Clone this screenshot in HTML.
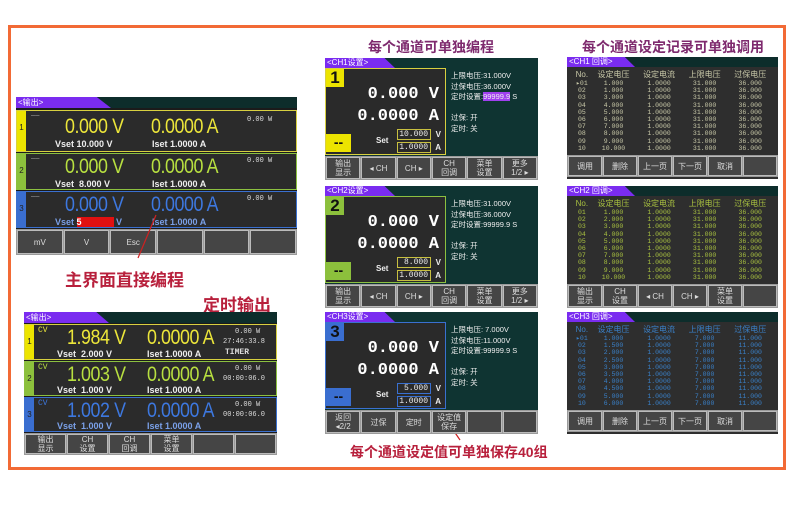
<!DOCTYPE html>
<html><head><meta charset="utf-8">
<style>
*{margin:0;padding:0;box-sizing:border-box}
body{width:790px;height:506px;background:#fff;position:relative;overflow:hidden;font-family:"Liberation Sans","Noto Sans CJK SC",sans-serif}
.a{position:absolute}
.frame{left:8px;top:25px;width:778px;height:445px;border:3px solid #f26a35}
.ttl{font-weight:bold;color:#7e2a6e;font-size:14px;white-space:nowrap}
.red{color:#b8203c;font-weight:bold;font-size:17px;white-space:nowrap}
.panel{background:#1b1b1b}
.hdr{height:11px;background:#0d2d2b}
.tab{position:absolute;left:0;top:0;height:11px;background:#7a2cf0;color:#fff;font-size:8px;line-height:11px;padding-left:2px;clip-path:polygon(0 0,85% 0,100% 100%,0 100%)}
.row{position:absolute;background:#2b2b2b;border:1px solid}
.strip{position:absolute;left:0;top:0;bottom:0;width:9px;font-size:8px;color:#222;text-align:center;padding-top:12px}
.big{position:absolute;font-size:21px;white-space:nowrap;transform:scaleX(.85);transform-origin:0 0;letter-spacing:-.5px}
.sm{position:absolute;font-size:9px;font-weight:bold;color:#eee;white-space:nowrap}
.w{position:absolute;font-size:7px;color:#ddd;white-space:nowrap;font-family:"Liberation Mono",monospace}
.btns{position:absolute;display:flex;background:#9a9a9a;padding:1px;gap:1px}
.btns div{flex:1;background:#454545;border:1px solid #bbb;color:#ddd;font-size:8px;text-align:center;line-height:9px;display:flex;align-items:center;justify-content:center}
.set{position:absolute;width:213px;height:122px;background:#0f3432}
.lbox{position:absolute;left:0;top:10px;width:121px;height:87px;background:#2a2a2a;border:1px solid}
.num{position:absolute;left:0;top:0;width:18px;height:18px;font-size:17px;font-weight:bold;color:#111;line-height:18px;text-align:center}
.dash{position:absolute;left:0;bottom:2px;width:25px;height:18px;color:#111;font-weight:bold;font-size:14px;line-height:16px;text-align:center}
.bv{position:absolute;right:6px;color:#fff;font-weight:bold;font-size:17px;font-family:"Liberation Mono",monospace;white-space:nowrap}
.sb{position:absolute;right:14px;width:34px;height:11px;border:1px solid #c8c040;color:#eee;font-size:8px;line-height:9px;text-align:right;padding-right:2px;font-family:"Liberation Mono",monospace}
.info{position:absolute;left:126px;color:#eee;font-size:7.5px;line-height:10.5px;white-space:nowrap}
.tbl{position:absolute;width:211px;height:122px;background:#2e2e2e}
.tbl table{position:absolute;left:6px;top:13px;width:200px;border-collapse:collapse;font-size:6.5px;line-height:7.2px;font-family:"Liberation Mono","Noto Sans CJK SC",monospace}
.tbl td{text-align:center;padding:0}
.tbl th{font-weight:normal;font-size:8px;line-height:10px;font-family:"Liberation Sans","Noto Sans CJK SC",sans-serif}
</style></head><body>
<div class="a frame"></div>

<div class="a ttl" style="left:368px;top:37px">每个通道可单独编程</div>
<div class="a ttl" style="left:582px;top:37px">每个通道设定记录可单独调用</div>

<!-- Panel A -->
<div class="a panel" style="left:16px;top:97px;width:281px;height:158px">
 <div class="hdr"><div class="tab" style="width:95px">&lt;输出&gt;</div></div>
 <div class="row" style="left:0;top:13px;width:281px;height:42px;border-color:#d8d040"><div class="strip" style="background:#ece400">1</div>
  <div class="w" style="left:14px;top:1px;color:#aaa">——</div>
  <div class="big" style="left:48px;top:4px;color:#ece63a">0.000 V</div><div class="big" style="left:134px;top:4px;color:#ece63a">0.0000 A</div>
  <div class="w" style="left:230px;top:5px">0.00 W</div>
  <div class="sm" style="left:38px;top:28px">Vset 10.000 V</div><div class="sm" style="left:135px;top:28px">Iset 1.0000 A</div></div>
 <div class="row" style="left:0;top:56px;width:281px;height:37px;border-color:#8cc040"><div class="strip" style="background:#8cc03c">2</div>
  <div class="w" style="left:14px;top:1px;color:#aaa">——</div>
  <div class="big" style="left:48px;top:1px;color:#b8e040">0.000 V</div><div class="big" style="left:134px;top:1px;color:#b8e040">0.0000 A</div>
  <div class="w" style="left:230px;top:3px">0.00 W</div>
  <div class="sm" style="left:38px;top:25px">Vset&nbsp; 8.000 V</div><div class="sm" style="left:135px;top:25px">Iset 1.0000 A</div></div>
 <div class="row" style="left:0;top:94px;width:281px;height:37px;border-color:#3a70d0"><div class="strip" style="background:#3a6ed0">3</div>
  <div class="w" style="left:14px;top:1px;color:#aaa">——</div>
  <div class="big" style="left:48px;top:1px;color:#3d78e0">0.000 V</div><div class="big" style="left:134px;top:1px;color:#3d78e0">0.0000 A</div>
  <div class="w" style="left:230px;top:3px">0.00 W</div>
  <div class="sm" style="left:38px;top:25px;color:#7aa0e8">Vset <span style="color:#fff;background:#e01010;padding-right:32px">5</span> V</div><div class="sm" style="left:135px;top:25px;color:#7aa0e8">Iset 1.0000 A</div></div>
 <div class="btns" style="left:0;top:132px;width:281px;height:26px"><div>mV</div><div>V</div><div>Esc</div><div></div><div></div><div></div></div>
</div>
<svg class="a" style="left:0;top:0" width="790" height="506"><line x1="156" y1="215" x2="138" y2="258" stroke="#d02020" stroke-width="1.2"/><line x1="238" y1="312" x2="238" y2="345" stroke="#d02020" stroke-width="1.2"/><line x1="445" y1="418" x2="460" y2="440" stroke="#d02020" stroke-width="1.2"/></svg>
<div class="a red" style="left:65px;top:266px">主界面直接编程</div>
<div class="a red" style="left:203px;top:291px">定时输出</div>

<!-- Panel B -->
<div class="a panel" style="left:24px;top:312px;width:253px;height:143px">
 <div class="hdr"><div class="tab" style="width:85px">&lt;输出&gt;</div></div>
 <div class="row" style="left:0;top:12px;width:253px;height:36px;border-color:#d8d040"><div class="strip" style="background:#ece400">1</div>
  <div class="w" style="left:13px;top:1px;color:#ece63a;font-size:8px">CV</div>
  <div class="big" style="left:42px;top:1px;color:#ece63a">1.984 V</div><div class="big" style="left:122px;top:1px;color:#ece63a">0.0000 A</div>
  <div class="w" style="left:210px;top:3px">0.00 W</div><div class="w" style="left:198px;top:13px">27:46:33.8</div><div class="w" style="left:200px;top:23px;font-weight:bold;font-size:8px">TIMER</div>
  <div class="sm" style="left:32px;top:24px">Vset&nbsp; 2.000 V</div><div class="sm" style="left:122px;top:24px">Iset 1.0000 A</div></div>
 <div class="row" style="left:0;top:49px;width:253px;height:35px;border-color:#8cc040"><div class="strip" style="background:#8cc03c">2</div>
  <div class="w" style="left:13px;top:1px;color:#b8e040;font-size:8px">CV</div>
  <div class="big" style="left:42px;top:1px;color:#b8e040">1.003 V</div><div class="big" style="left:122px;top:1px;color:#b8e040">0.0000 A</div>
  <div class="w" style="left:210px;top:3px">0.00 W</div><div class="w" style="left:198px;top:13px">00:00:06.0</div>
  <div class="sm" style="left:32px;top:23px">Vset&nbsp; 1.000 V</div><div class="sm" style="left:122px;top:23px">Iset 1.0000 A</div></div>
 <div class="row" style="left:0;top:85px;width:253px;height:35px;border-color:#3a70d0"><div class="strip" style="background:#3a6ed0">3</div>
  <div class="w" style="left:13px;top:1px;color:#3d78e0;font-size:8px">CV</div>
  <div class="big" style="left:42px;top:1px;color:#3d78e0">1.002 V</div><div class="big" style="left:122px;top:1px;color:#3d78e0">0.0000 A</div>
  <div class="w" style="left:210px;top:3px">0.00 W</div><div class="w" style="left:198px;top:13px">00:00:06.0</div>
  <div class="sm" style="left:32px;top:23px;color:#7aa0e8">Vset&nbsp; 1.000 V</div><div class="sm" style="left:122px;top:23px;color:#7aa0e8">Iset 1.0000 A</div></div>
 <div class="btns" style="left:0;top:121px;width:253px;height:22px"><div>输出<br>显示</div><div>CH<br>设置</div><div>CH<br>回调</div><div>菜单<br>设置</div><div></div><div></div></div>
</div>

<!-- Middle settings panels -->
<div class="a set" style="left:325px;top:58px">
 <div class="hdr" style="position:absolute;left:0;top:0;width:213px;height:10px;background:#0f3432"><div class="tab" style="width:70px;height:10px;line-height:10px">&lt;CH1设置&gt;</div></div>
 <div class="lbox" style="border-color:#d8d040"><div class="num" style="background:#ece400">1</div><div class="dash" style="background:#ece400">--</div>
  <div class="bv" style="top:16px">0.000 V</div><div class="bv" style="top:38px">0.0000 A</div>
  <div class="sm" style="left:50px;top:67px;font-size:8px">Set</div>
  <div class="sb" style="top:60px">10.000</div><div class="sb" style="top:73px">1.0000</div>
  <div class="sm" style="right:4px;top:61px;font-size:8px">V</div><div class="sm" style="right:4px;top:74px;font-size:8px">A</div></div>
 <div class="info" style="top:13px">上限电压:31.000V<br>过保电压:36.000V<br>定时设置:<span style="background:#a040f0">99999.9</span> S<br><br>过保: 开<br>定时: 关</div>
 <div class="btns" style="left:0;top:98px;width:213px;height:24px"><div>输出<br>显示</div><div>◂ CH</div><div>CH ▸</div><div>CH<br>回调</div><div>菜单<br>设置</div><div>更多<br>1/2 ▸</div></div>
</div>
<div class="a set" style="left:325px;top:186px">
 <div class="hdr" style="position:absolute;left:0;top:0;width:213px;height:10px;background:#0f3432"><div class="tab" style="width:70px;height:10px;line-height:10px">&lt;CH2设置&gt;</div></div>
 <div class="lbox" style="border-color:#8cc040"><div class="num" style="background:#8cc03c">2</div><div class="dash" style="background:#8cc03c">--</div>
  <div class="bv" style="top:16px">0.000 V</div><div class="bv" style="top:38px">0.0000 A</div>
  <div class="sm" style="left:50px;top:67px;font-size:8px">Set</div>
  <div class="sb" style="top:60px">8.000</div><div class="sb" style="top:73px">1.0000</div>
  <div class="sm" style="right:4px;top:61px;font-size:8px">V</div><div class="sm" style="right:4px;top:74px;font-size:8px">A</div></div>
 <div class="info" style="top:13px">上限电压:31.000V<br>过保电压:36.000V<br>定时设置:99999.9 S<br><br>过保: 开<br>定时: 关</div>
 <div class="btns" style="left:0;top:98px;width:213px;height:24px"><div>输出<br>显示</div><div>◂ CH</div><div>CH ▸</div><div>CH<br>回调</div><div>菜单<br>设置</div><div>更多<br>1/2 ▸</div></div>
</div>
<div class="a set" style="left:325px;top:312px">
 <div class="hdr" style="position:absolute;left:0;top:0;width:213px;height:10px;background:#0f3432"><div class="tab" style="width:70px;height:10px;line-height:10px">&lt;CH3设置&gt;</div></div>
 <div class="lbox" style="border-color:#3a70d0"><div class="num" style="background:#3a6ed0">3</div><div class="dash" style="background:#3a6ed0">--</div>
  <div class="bv" style="top:16px">0.000 V</div><div class="bv" style="top:38px">0.0000 A</div>
  <div class="sm" style="left:50px;top:67px;font-size:8px">Set</div>
  <div class="sb" style="top:60px;border-color:#3a70d0">5.000</div><div class="sb" style="top:73px;border-color:#3a70d0">1.0000</div>
  <div class="sm" style="right:4px;top:61px;font-size:8px">V</div><div class="sm" style="right:4px;top:74px;font-size:8px">A</div></div>
 <div class="info" style="top:13px">上限电压: 7.000V<br>过保电压:11.000V<br>定时设置:99999.9 S<br><br>过保: 开<br>定时: 关</div>
 <div class="btns" style="left:0;top:98px;width:213px;height:24px"><div>返回<br>◂2/2</div><div>过保</div><div>定时</div><div>设定值<br>保存</div><div></div><div></div></div>
</div>
<div class="a red" style="left:350px;top:442px;font-size:14px">每个通道设定值可单独保存40组</div>

<!-- Right table panels -->
<div class="a tbl" style="left:567px;top:57px">
 <div class="hdr" style="height:10px"><div class="tab" style="width:68px;height:10px;line-height:10px">&lt;CH1 回调&gt;</div></div>
 <table style="color:#c8c8a8"><tr><th>No.</th><th>设定电压</th><th>设定电流</th><th>上限电压</th><th>过保电压</th></tr>
 <tr><td>▸01</td><td>1.000</td><td>1.0000</td><td>31.000</td><td>36.000</td></tr>
 <tr><td>02</td><td>1.000</td><td>1.0000</td><td>31.000</td><td>36.000</td></tr>
 <tr><td>03</td><td>3.000</td><td>1.0000</td><td>31.000</td><td>36.000</td></tr>
 <tr><td>04</td><td>4.000</td><td>1.0000</td><td>31.000</td><td>36.000</td></tr>
 <tr><td>05</td><td>5.000</td><td>1.0000</td><td>31.000</td><td>36.000</td></tr>
 <tr><td>06</td><td>6.000</td><td>1.0000</td><td>31.000</td><td>36.000</td></tr>
 <tr><td>07</td><td>7.000</td><td>1.0000</td><td>31.000</td><td>36.000</td></tr>
 <tr><td>08</td><td>8.000</td><td>1.0000</td><td>31.000</td><td>36.000</td></tr>
 <tr><td>09</td><td>9.000</td><td>1.0000</td><td>31.000</td><td>36.000</td></tr>
 <tr><td>10</td><td>10.000</td><td>1.0000</td><td>31.000</td><td>36.000</td></tr></table>
 <div class="btns" style="left:0;top:98px;width:211px;height:22px"><div>调用</div><div>删除</div><div>上一页</div><div>下一页</div><div>取消</div><div></div></div>
</div>
<div class="a tbl" style="left:567px;top:186px">
 <div class="hdr" style="height:10px"><div class="tab" style="width:68px;height:10px;line-height:10px">&lt;CH2 回调&gt;</div></div>
 <table style="color:#a8c040"><tr><th>No.</th><th>设定电压</th><th>设定电流</th><th>上限电压</th><th>过保电压</th></tr>
 <tr><td>01</td><td>1.000</td><td>1.0000</td><td>31.000</td><td>36.000</td></tr>
 <tr><td>02</td><td>2.000</td><td>1.0000</td><td>31.000</td><td>36.000</td></tr>
 <tr><td>03</td><td>3.000</td><td>1.0000</td><td>31.000</td><td>36.000</td></tr>
 <tr><td>04</td><td>4.000</td><td>1.0000</td><td>31.000</td><td>36.000</td></tr>
 <tr><td>05</td><td>5.000</td><td>1.0000</td><td>31.000</td><td>36.000</td></tr>
 <tr><td>06</td><td>6.000</td><td>1.0000</td><td>31.000</td><td>36.000</td></tr>
 <tr><td>07</td><td>7.000</td><td>1.0000</td><td>31.000</td><td>36.000</td></tr>
 <tr><td>08</td><td>8.000</td><td>1.0000</td><td>31.000</td><td>36.000</td></tr>
 <tr><td>09</td><td>9.000</td><td>1.0000</td><td>31.000</td><td>36.000</td></tr>
 <tr><td>10</td><td>10.000</td><td>1.0000</td><td>31.000</td><td>36.000</td></tr></table>
 <div class="btns" style="left:0;top:98px;width:211px;height:24px"><div>输出<br>显示</div><div>CH<br>设置</div><div>◂ CH</div><div>CH ▸</div><div>菜单<br>设置</div><div></div></div>
</div>
<div class="a tbl" style="left:567px;top:312px">
 <div class="hdr" style="height:10px"><div class="tab" style="width:68px;height:10px;line-height:10px">&lt;CH3 回调&gt;</div></div>
 <table style="color:#3a80c8"><tr><th>No.</th><th>设定电压</th><th>设定电流</th><th>上限电压</th><th>过保电压</th></tr>
 <tr><td>▸01</td><td>1.000</td><td>1.0000</td><td>7.000</td><td>11.000</td></tr>
 <tr><td>02</td><td>1.500</td><td>1.0000</td><td>7.000</td><td>11.000</td></tr>
 <tr><td>03</td><td>2.000</td><td>1.0000</td><td>7.000</td><td>11.000</td></tr>
 <tr><td>04</td><td>2.500</td><td>1.0000</td><td>7.000</td><td>11.000</td></tr>
 <tr><td>05</td><td>3.000</td><td>1.0000</td><td>7.000</td><td>11.000</td></tr>
 <tr><td>06</td><td>3.500</td><td>1.0000</td><td>7.000</td><td>11.000</td></tr>
 <tr><td>07</td><td>4.000</td><td>1.0000</td><td>7.000</td><td>11.000</td></tr>
 <tr><td>08</td><td>4.500</td><td>1.0000</td><td>7.000</td><td>11.000</td></tr>
 <tr><td>09</td><td>5.000</td><td>1.0000</td><td>7.000</td><td>11.000</td></tr>
 <tr><td>10</td><td>6.000</td><td>1.0000</td><td>7.000</td><td>11.000</td></tr></table>
 <div class="btns" style="left:0;top:98px;width:211px;height:22px"><div>调用</div><div>删除</div><div>上一页</div><div>下一页</div><div>取消</div><div></div></div>
</div>
</body></html>
